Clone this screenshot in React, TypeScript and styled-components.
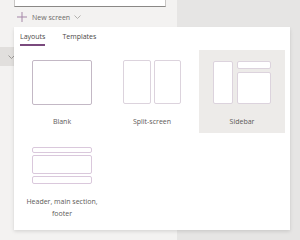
import React from 'react';
import styled, { createGlobalStyle } from 'styled-components';

const GlobalStyle = createGlobalStyle`
  html, body {
    margin: 0;
    padding: 0;
    width: 300px;
    height: 240px;
    overflow: hidden;
    font-family: 'Open Sans', 'Noto Sans', sans-serif;
  }
`;

const Page = styled.div`
  position: relative;
  display: flex;
  width: 300px;
  height: 240px;
  overflow: hidden;
`;

const TreePane = styled.div`
  width: 177px;
  flex-shrink: 0;
  background: #f3f2f1;
  display: flex;
  flex-direction: column;
`;

const Canvas = styled.div`
  flex: 1;
  background: #e6e5e4;
`;

const SearchBox = styled.div`
  margin: -10px 0 0 14px;
  width: 150px;
  height: 15px;
  background: #ffffff;
  border: 1px solid #c8c6c4;
  border-bottom-color: #8a8886;
`;

const NewScreenRow = styled.div`
  display: flex;
  align-items: center;
  height: 20px;
  padding-left: 17px;
  color: #6b6967;
  font-size: 7px;
`;

const NewScreenLabel = styled.span`
  margin: 0 4px 0 5px;
`;

const TreeRow = styled.div`
  margin-top: 20px;
  height: 19px;
  background: #e1dfdd;
  display: flex;
  align-items: center;
  padding-left: 8px;
`;

const Popup = styled.div`
  position: absolute;
  left: 14px;
  top: 27px;
  width: 276px;
  height: 203px;
  box-sizing: border-box;
  padding: 0 5px;
  background: #ffffff;
  box-shadow: 0 1.6px 3.6px rgba(0, 0, 0, 0.13), 0 0.3px 0.9px rgba(0, 0, 0, 0.11);
  display: flex;
  flex-direction: column;
`;

const Tabs = styled.div`
  display: flex;
  gap: 17px;
  height: 23px;
  padding-left: 1px;
`;

const Tab = styled.div<{ $active?: boolean }>`
  position: relative;
  display: flex;
  align-items: center;
  height: 19px;
  font-size: 7px;
  color: #4a4846;

  &::after {
    content: '';
    display: ${(p) => (p.$active ? 'block' : 'none')};
    position: absolute;
    left: 0;
    right: 0;
    bottom: 0;
    height: 2px;
    background: #7a4a7d;
  }
`;

const Grid = styled.div`
  display: grid;
  grid-template-columns: repeat(3, 86px);
  grid-auto-rows: 83px;
  column-gap: 4px;
  row-gap: 4px;
`;

const Card = styled.div<{ $selected?: boolean }>`
  display: flex;
  flex-direction: column;
  align-items: center;
  padding-top: 10px;
  background: ${(p) => (p.$selected ? '#edebe9' : 'transparent')};
`;

const Thumb = styled.div<{ $layout: 'blank' | 'split' | 'sidebar' | 'stack' }>`
  width: 60px;
  height: 45px;
  box-sizing: border-box;
  display: grid;
  ${(p) =>
    p.$layout === 'split'
      ? 'grid-template-columns: 1fr 1fr; column-gap: 3px; padding: 0 1px 1px 1px;'
      : p.$layout === 'sidebar'
      ? 'grid-template-columns: 20px 1fr; grid-template-rows: 8px 1fr; gap: 3px 4px; padding: 1px 1px 1px 1px;'
      : p.$layout === 'stack'
      ? 'grid-template-rows: 6px 1fr 8px; row-gap: 2px; padding: 0 0 1px 0;'
      : ''}
`;

const Pane = styled.div<{ $tone: 'strong' | 'soft' | 'tint'; $tall?: boolean }>`
  box-sizing: border-box;
  border: 1px solid
    ${(p) => (p.$tone === 'tint' ? '#dac8dc' : p.$tone === 'soft' ? '#dcd3dd' : '#c3b8c5')};
  border-radius: 2px;
  background: #ffffff;
  ${(p) => (p.$tall ? 'grid-row: 1 / span 2;' : '')}
`;

const Label = styled.div`
  margin-top: 11px;
  width: 80px;
  font-size: 7px;
  line-height: 12px;
  color: #5c5a58;
  text-align: center;
`;

const PlusIcon = () => (
  <svg width="10" height="10" viewBox="0 0 10 10">
    <path d="M5 0v10M0 5h10" stroke="#a587a8" strokeWidth="1" fill="none" />
  </svg>
);

const Chevron = ({ color }: { color: string }) => (
  <svg width="7" height="4" viewBox="0 0 7 4">
    <path d="M0.5 0.5l3 3 3-3" stroke={color} strokeWidth="0.8" fill="none" />
  </svg>
);

const layouts = [
  { key: 'blank', title: 'Blank' },
  { key: 'split', title: 'Split-screen' },
  { key: 'sidebar', title: 'Sidebar', selected: true },
  { key: 'stack', title: 'Header, main section, footer' }
];

function LayoutThumb({ layout }: { layout: string }) {
  switch (layout) {
    case 'split':
      return (
        <Thumb $layout="split">
          <Pane $tone="soft" />
          <Pane $tone="soft" />
        </Thumb>
      );
    case 'sidebar':
      return (
        <Thumb $layout="sidebar">
          <Pane $tone="soft" $tall />
          <Pane $tone="soft" />
          <Pane $tone="soft" />
        </Thumb>
      );
    case 'stack':
      return (
        <Thumb $layout="stack">
          <Pane $tone="tint" />
          <Pane $tone="tint" />
          <Pane $tone="tint" />
        </Thumb>
      );
    default:
      return (
        <Thumb $layout="blank">
          <Pane $tone="strong" />
        </Thumb>
      );
  }
}

export default function App() {
  return (
    <>
      <GlobalStyle />
      <Page>
        <TreePane>
          <SearchBox />
          <NewScreenRow>
            <PlusIcon />
            <NewScreenLabel>New screen</NewScreenLabel>
            <Chevron color="#a19f9d" />
          </NewScreenRow>
          <TreeRow>
            <Chevron color="#8a8886" />
          </TreeRow>
        </TreePane>
        <Canvas />

        <Popup>
          <Tabs>
            <Tab $active>Layouts</Tab>
            <Tab>Templates</Tab>
          </Tabs>
          <Grid>
            {layouts.map((item) => (
              <Card key={item.key} $selected={item.selected}>
                <LayoutThumb layout={item.key} />
                <Label>{item.title}</Label>
              </Card>
            ))}
          </Grid>
        </Popup>
      </Page>
    </>
  );
}
